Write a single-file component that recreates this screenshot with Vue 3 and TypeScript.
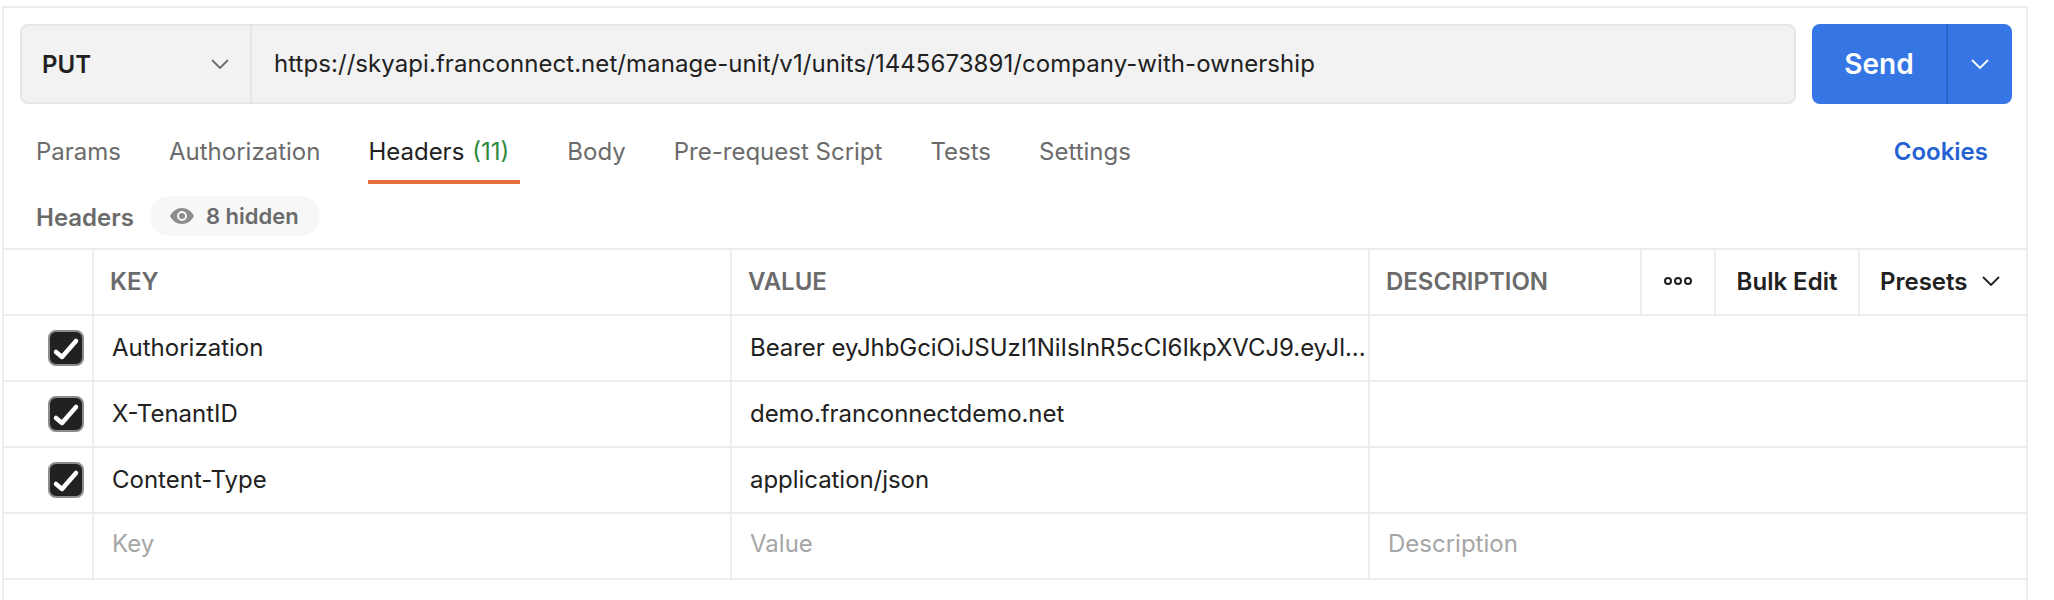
<script setup lang="ts">
interface Row { key: string; value: string }
const tabs = [
  { label: 'Params' },
  { label: 'Authorization' },
  { label: 'Headers', count: '(11)', active: true },
  { label: 'Body' },
  { label: 'Pre-request Script' },
  { label: 'Tests' },
  { label: 'Settings' },
]
const rows: Row[] = [
  { key: 'Authorization', value: 'Bearer eyJhbGciOiJSUzI1NiIsInR5cCI6IkpXVCJ9.eyJl...' },
  { key: 'X-TenantID', value: 'demo.franconnectdemo.net' },
  { key: 'Content-Type', value: 'application/json' },
]
</script>

<template>
  <div class="page">
    <div class="frame">
      <div class="request">
        <div class="bar">
          <div class="method">
            <span>PUT</span>
            <svg class="chev" viewBox="0 0 18 10"><path d="M1 1l8 8 8-8" /></svg>
          </div>
          <div class="url">https://skyapi.franconnect.net/manage-unit/v1/units/1445673891/company-with-ownership</div>
        </div>
        <div class="send">
          <span class="send-label">Send</span>
          <span class="send-more">
            <svg class="chev white" viewBox="0 0 18 10"><path d="M1 1l8 8 8-8" /></svg>
          </span>
        </div>
      </div>
      <div class="tabs">
        <div v-for="t in tabs" :key="t.label" class="tab" :class="{ active: t.active }">
          {{ t.label }}<span v-if="t.count" class="count">{{ t.count }}</span>
        </div>
        <div class="cookies">Cookies</div>
      </div>
      <div class="subhead">
        <span class="subtitle">Headers</span>
        <span class="pill">
          <svg class="eye" viewBox="0 0 24 16">
            <path fill-rule="evenodd" d="M12 0C7 0 2.500 3 0 8c2.500 5 7 8 12 8s9.500-3 12-8c-2.500-5-7-8-12-8zm0 3a5 5 0 1 1 0 10 5 5 0 0 1 0-10z" />
            <circle cx="12" cy="8" r="3" />
          </svg>
          8 hidden
        </span>
      </div>
      <div class="table">
        <div class="row head">
          <div class="c0"></div>
          <div class="c1">KEY</div>
          <div class="c2">VALUE</div>
          <div class="c3">DESCRIPTION</div>
          <div class="c4"><svg class="dots" viewBox="0 0 28 10"><circle cx="4" cy="5" r="3" /><circle cx="14" cy="5" r="3" /><circle cx="24" cy="5" r="3" /></svg></div>
          <div class="c5">Bulk Edit</div>
          <div class="c6">Presets<svg class="chev dark" viewBox="0 0 18 10"><path d="M1 1l8 8 8-8" /></svg></div>
        </div>
        <div v-for="r in rows" :key="r.key" class="row body">
          <div class="c0">
            <span class="check">
              <svg viewBox="0 0 32 32"><path d="M6 20l6 5L26 9" /></svg>
            </span>
          </div>
          <div class="c1 cell">{{ r.key }}</div>
          <div class="c2 cell"><span class="val">{{ r.value }}</span></div>
          <div class="c3 wide"></div>
        </div>
        <div class="row ph">
          <div class="c0"></div>
          <div class="c1 cell">Key</div>
          <div class="c2 cell">Value</div>
          <div class="c3 wide cell">Description</div>
        </div>
      </div>
    </div>
  </div>
</template>

<style>
html, body { margin: 0; background: #fff; }
</style>

<style scoped>
.page {
  width: 2054px;
  height: 600px;
  overflow: hidden;
  background: #fff;
  font-family: Inter, "Liberation Sans", sans-serif;
  color: #212121;
}
.frame {
  box-sizing: border-box;
  width: 2026px;
  height: 594px;
  margin-left: 2px;
  border-top: 2px solid #ededed;
  border-left: 2px solid #ededed;
  border-right: 2px solid #ededed;
  position: relative;
  top: 6px;
}
.request {
  display: flex;
  margin: 16px 14px 0 16px;
  height: 80px;
  gap: 16px;
}
.bar {
  flex: 1;
  display: flex;
  box-sizing: border-box;
  background: #f2f2f2;
  border: 2px solid #e6e6e6;
  border-radius: 8px;
  align-items: stretch;
}
.method {
  width: 230px;
  box-sizing: border-box;
  display: flex;
  align-items: center;
  justify-content: space-between;
  padding: 0 21px 0 20px;
  border-right: 2px solid #e6e6e6;
  font-size: 24px;
  font-weight: 600;
}
.chev {
  width: 18px;
  height: 10px;
  fill: none;
  stroke: #6b6b6b;
  stroke-width: 1.800;
}
.chev.white { stroke: #fff; }
.chev.dark { stroke: #212121; margin-left: 14px; }
.url {
  padding-left: 22px;
  font-size: 24px;
  letter-spacing: 0.06px;
  line-height: 76px;
  white-space: nowrap;
}
.send {
  width: 200px;
  display: flex;
  background: #3676e4;
  border-radius: 8px;
  color: #fff;
  font-size: 28px;
  font-weight: 600;
}
.send-label {
  width: 134px;
  display: flex;
  align-items: center;
  justify-content: center;
}
.send-more {
  flex: 1;
  display: flex;
  align-items: center;
  justify-content: center;
  border-left: 2px solid #2c66c9;
}
.tabs {
  display: flex;
  height: 80px;
  padding: 0 38px 0 32px;
  font-size: 24px;
  color: #6b6b6b;
  gap: 0 48px;
}
.tab {
  box-sizing: border-box;
  height: 80px;
  padding: 19px 0 4px;
  display: flex;
  align-items: center;
  white-space: nowrap;
  position: relative;
}
.tab.active { color: #212121; margin-right: 10px; }
.tab.active::after {
  content: "";
  position: absolute;
  left: 0;
  right: -11px;
  bottom: 0;
  height: 4px;
  background: #e8703f;
}
.count { color: #2c8a3c; margin-left: 8px; }
.cookies {
  margin-left: auto;
  color: #2462d1;
  font-weight: 600;
  display: flex;
  align-items: center;
  padding: 19px 0 4px;
}
.subhead {
  display: flex;
  align-items: center;
  height: 64px;
  padding-left: 32px;
  gap: 16px;
}
.subtitle {
  font-size: 24px;
  font-weight: 600;
  color: #6b6b6b;
  padding-top: 2px;
}
.pill {
  height: 40px;
  width: 170px;
  box-sizing: border-box;
  padding-left: 20px;
  display: flex;
  align-items: center;
  gap: 12px;
  background: #f7f7f7;
  border-radius: 20px;
  font-size: 22px;
  font-weight: 600;
  color: #6b6b6b;
}
.eye {
  width: 24px;
  height: 16px;
  fill: #8c8c8c;
}
.table {
  border-top: 2px solid #ededed;
}
.row {
  display: flex;
  height: 66px;
  box-sizing: border-box;
  border-bottom: 2px solid #ededed;
  font-size: 24px;
  align-items: stretch;
}
.row > div {
  box-sizing: border-box;
  display: flex;
  align-items: center;
  border-right: 2px solid #ededed;
  min-width: 0;
}
.c0 { width: 90px; justify-content: flex-end; padding-right: 8px; }
.c1 { width: 638px; padding-left: 16px; }
.c2 { width: 638px; padding-left: 16px; }
.c3 { width: 272px; padding-left: 16px; }
.c3.wide { flex: 1; border-right: none !important; }
.c4 { width: 74px; justify-content: center; }
.c5 { width: 144px; justify-content: center; font-weight: 600; }
.c6 { flex: 1; padding-left: 20px; font-weight: 600; border-right: none !important; }
.head { font-weight: 600; color: #6b6b6b; }
.head .c5, .head .c6 { color: #212121; }
.head > div { padding-bottom: 2px; }
.cell { padding-left: 18px; padding-bottom: 2px; }
.ph .cell { padding-bottom: 5px; }
.val {
  white-space: nowrap;
  letter-spacing: -0.05px;
}
.dots {
  width: 28px;
  height: 10px;
  fill: none;
  stroke: #212121;
  stroke-width: 2;
}
.check {
  width: 36px;
  height: 36px;
  box-sizing: border-box;
  background: #212121;
  border: 2px solid #8c8c8c;
  border-radius: 8px;
  display: flex;
}
.check svg {
  width: 32px;
  height: 32px;
  fill: none;
  stroke: #fff;
  stroke-width: 4.500;
  stroke-linecap: round;
  stroke-linejoin: round;
}
.ph { color: #a6a6a6; }
</style>
